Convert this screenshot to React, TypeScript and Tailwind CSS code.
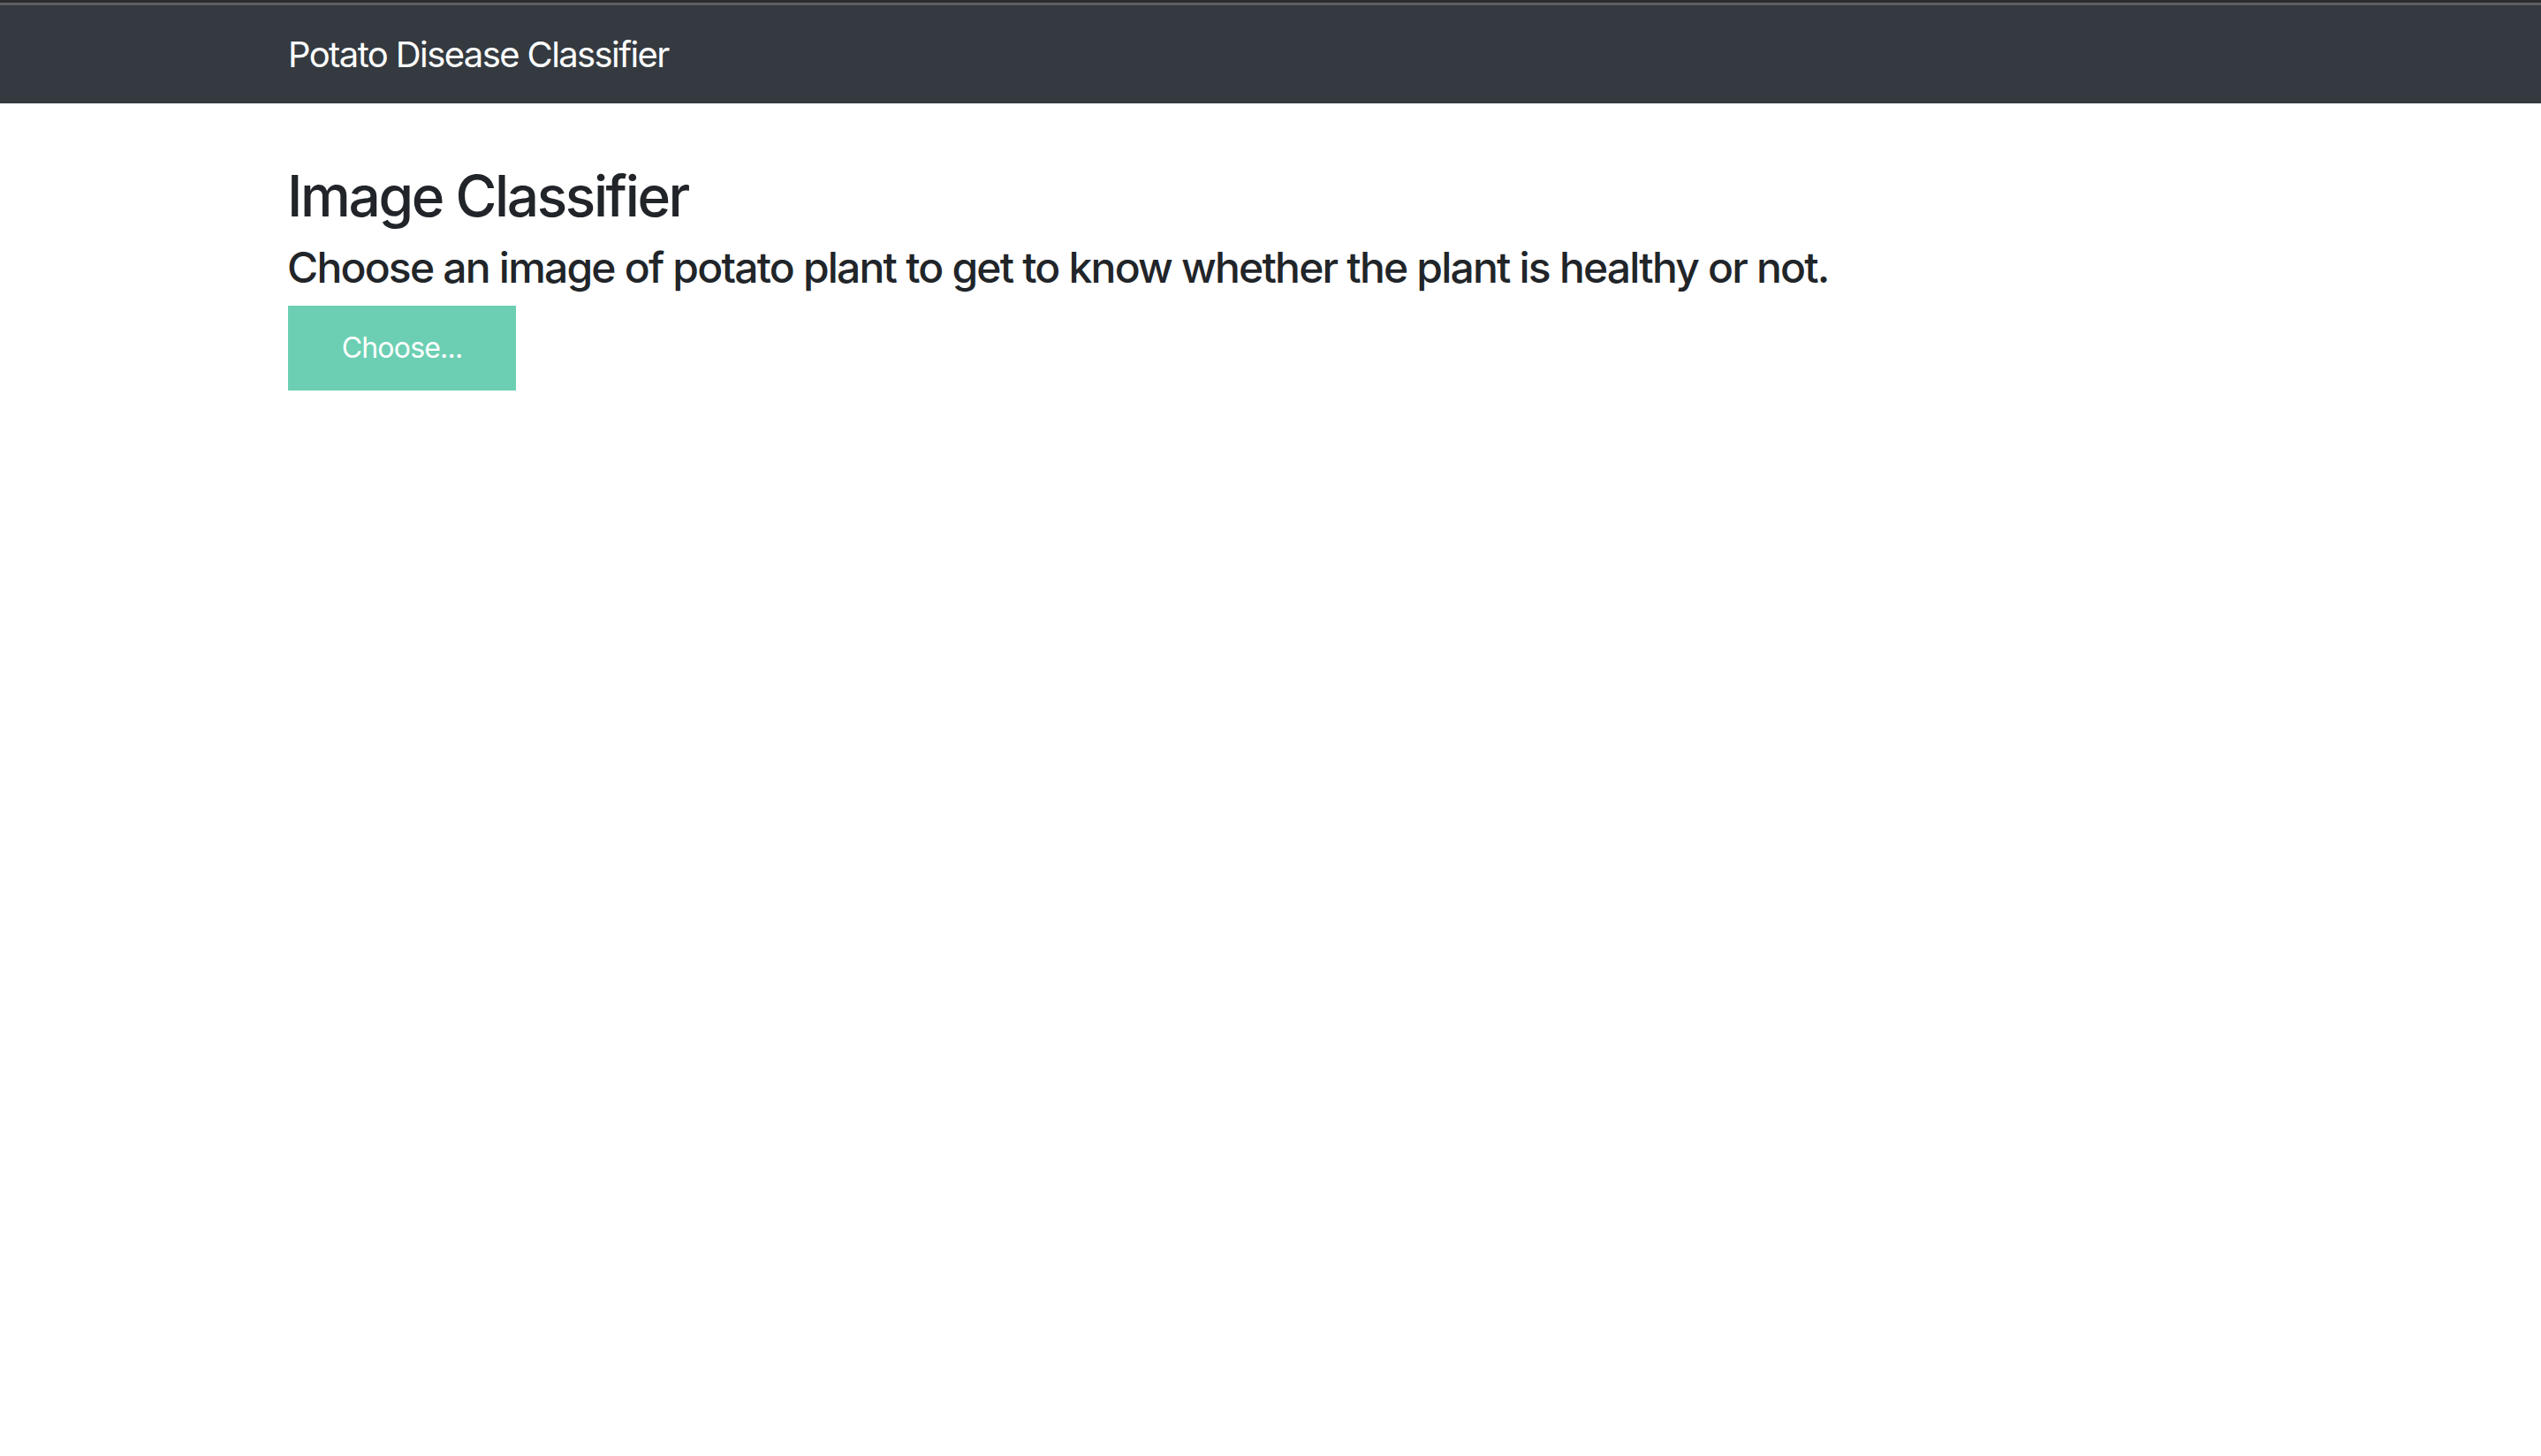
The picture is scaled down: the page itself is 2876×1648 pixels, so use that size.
import React from "react";

const App: React.FC = () => {
  return (
    <div
      className="min-h-screen bg-white text-[#212529]"
      style={{ fontFamily: "Inter, 'Liberation Sans', sans-serif" }}
    >
      {/* window edge above the navbar */}
      <div className="h-[3px] bg-[#2c2c2e]" />
      <div className="h-[3px] bg-[#5e5f61]" />

      <nav className="bg-[#343a40] h-[111px] flex items-center">
        <div className="w-[2280px] mx-auto pl-[28px] pr-[30px]">
          <a className="text-white text-[40px] leading-[60px] tracking-[-1.6px]">
            Potato Disease Classifier
          </a>
        </div>
      </nav>

      <main className="w-[2280px] mx-auto pl-[27px] pr-[30px] pt-[66px]">
        <h2 className="text-[64px] leading-[77px] font-medium tracking-[-2.4px] mb-[14px]">
          Image Classifier
        </h2>
        <h4 className="text-[48px] leading-[58px] font-medium tracking-[-1.8px] mb-[14px]">
          Choose an image of potato plant to get to know whether the plant is healthy or not.
        </h4>
        <button className="ml-[1px] bg-[#6ccfb3] text-white text-[32px] w-[258px] h-[96px] tracking-[-0.8px]">
          Choose...
        </button>
      </main>
    </div>
  );
};

export default App;
